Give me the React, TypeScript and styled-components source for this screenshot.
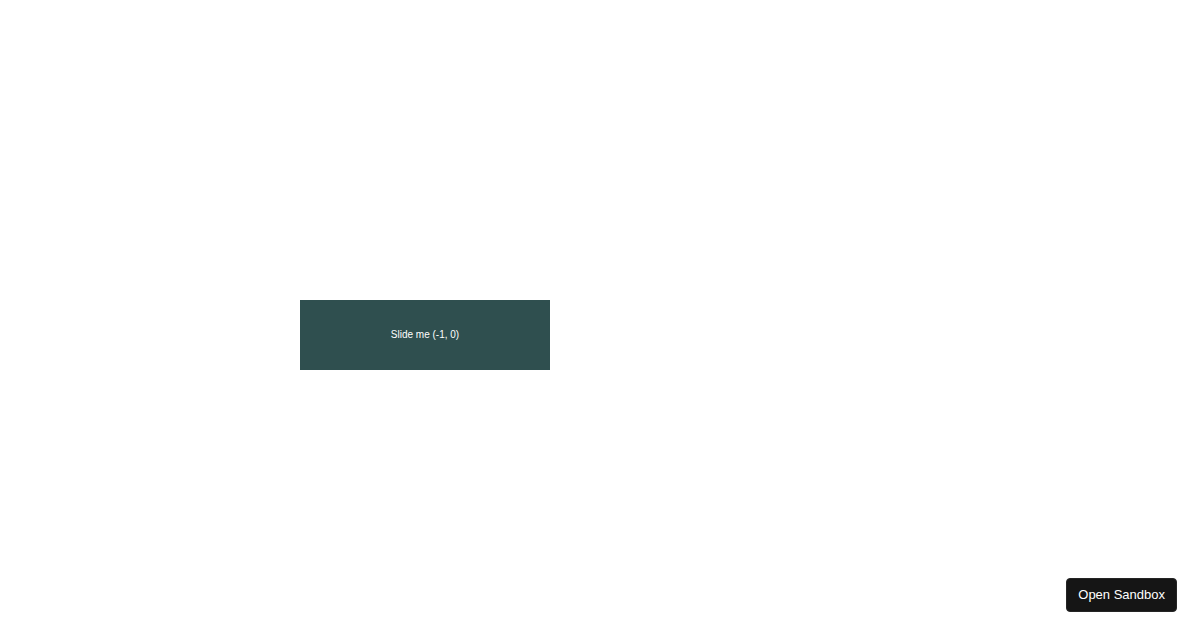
import React from "react";
import styled, { createGlobalStyle } from "styled-components";

const GlobalStyle = createGlobalStyle`
  * {
    box-sizing: border-box;
  }

  body {
    margin: 0;
    background: #ffffff;
    font-family: Helvetica, "Liberation Sans", Arial, sans-serif;
  }
`;

const Stage = styled.main`
  min-height: 100vh;
  padding: 300px 0 0 300px;
`;

const SlideBox = styled.div`
  display: flex;
  align-items: center;
  justify-content: center;
  width: 250px;
  height: 70px;
  background: #2f4f4f;
  color: #ffffff;
  font-size: 10px;
  line-height: 12px;
  cursor: grab;
  user-select: none;
`;

const SandboxButton = styled.button`
  position: fixed;
  right: 23px;
  bottom: 18px;
  padding: 8px 11px;
  border: 1px solid #252525;
  border-radius: 4px;
  background: #151515;
  color: #ffffff;
  font-family: inherit;
  font-size: 13px;
  line-height: 16px;
  cursor: pointer;
`;

export default function App() {
  return (
    <>
      <GlobalStyle />
      <Stage>
        <SlideBox>Slide me (-1, 0)</SlideBox>
      </Stage>
      <SandboxButton type="button">Open Sandbox</SandboxButton>
    </>
  );
}
